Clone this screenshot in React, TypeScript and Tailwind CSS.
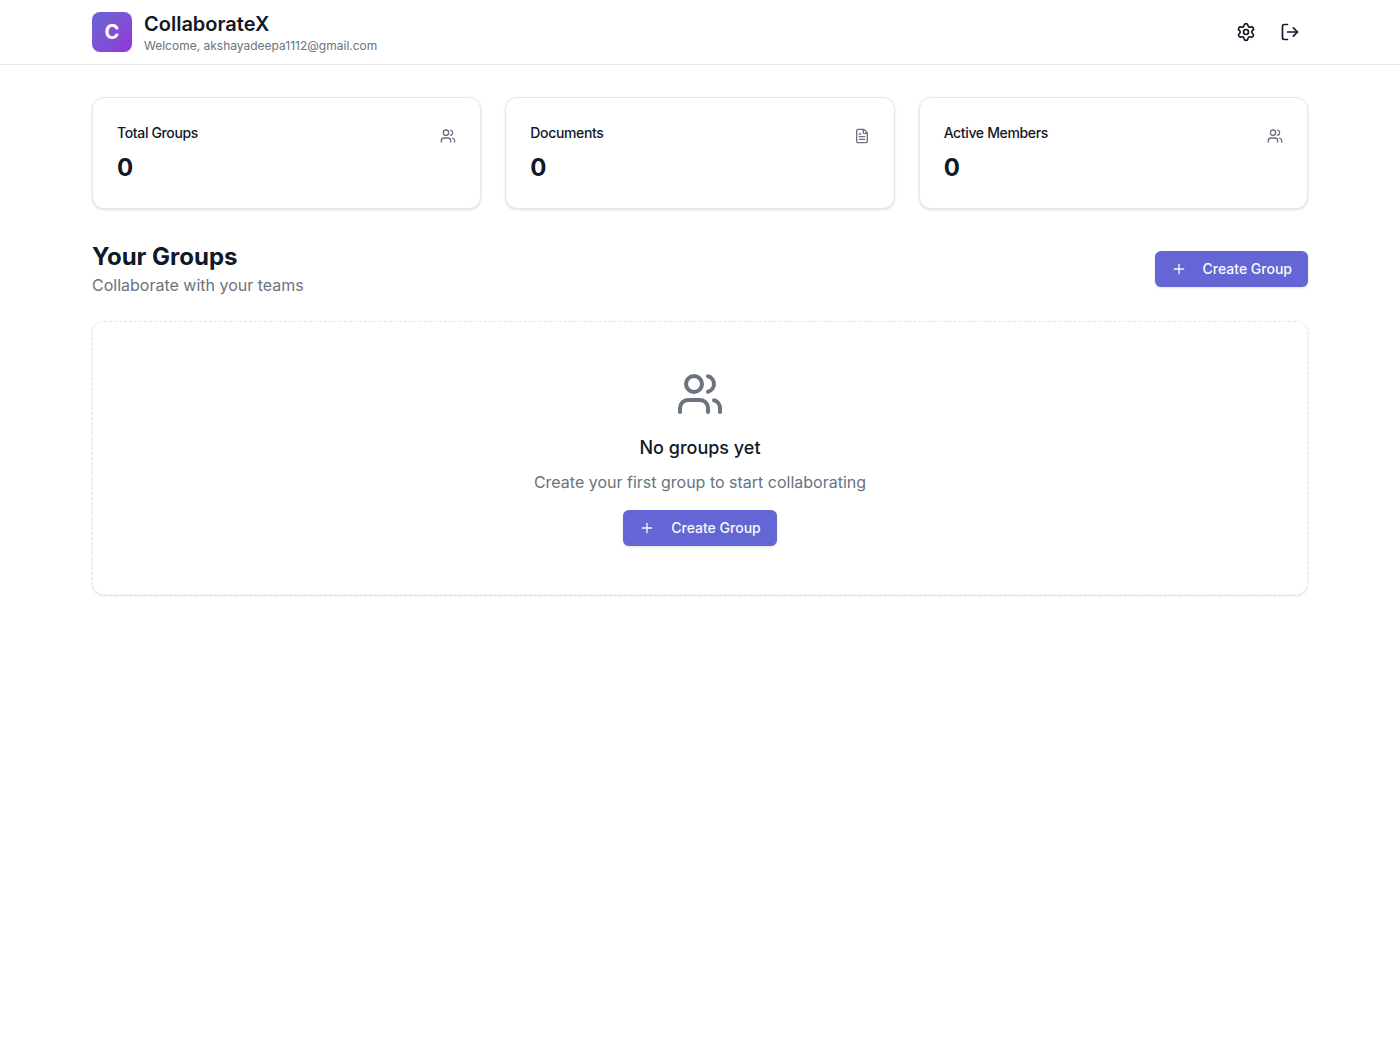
import { FileText, LogOut, Plus, Settings, Users } from "lucide-react";

function Stat({ label, icon }: { label: string; icon: "users" | "file" }) {
  const Icon = icon === "users" ? Users : FileText;
  return (
    <div className="rounded-xl border border-[#e5e7eb] bg-white px-6 pt-6 pb-6 shadow-sm">
      <div className="flex items-center justify-between pb-2">
        <span className="text-sm font-medium leading-5 tracking-tight text-[#111827]">{label}</span>
        <Icon className="mt-1.5 h-4 w-4 text-[#6b7280]" strokeWidth={2} />
      </div>
      <div className="text-2xl font-bold leading-8 text-[#111827]">0</div>
    </div>
  );
}

function CreateButton() {
  return (
    <button className="flex h-9 items-center rounded-md bg-[#6366d4] px-4 text-sm font-medium text-[#f8fafc] shadow-sm">
      <Plus className="mr-4 h-4 w-4" strokeWidth={2} />
      Create Group
    </button>
  );
}

export default function App() {
  return (
    <div className="min-h-[1050px] bg-white font-['Inter',sans-serif] text-[#111827]">
      <header className="h-[65px] border-b border-[#e5e7eb] bg-white">
        <div className="mx-auto flex h-16 max-w-7xl items-center justify-between px-8">
          <div className="flex items-center gap-3">
            <div className="flex h-10 w-10 items-center justify-center rounded-lg bg-gradient-to-br from-[#6366d4] to-[#9333d8] text-xl font-bold text-white">
              C
            </div>
            <div>
              <h1 className="text-xl font-semibold leading-7 text-[#111827]">CollaborateX</h1>
              <p className="text-xs leading-4 text-[#6b7280]">Welcome, akshayadeepa1112@gmail.com</p>
            </div>
          </div>
          <div className="flex items-center gap-2">
            <button className="flex h-9 w-9 items-center justify-center text-[#111827]">
              <Settings className="h-5 w-5" />
            </button>
            <button className="flex h-9 w-9 items-center justify-center text-[#111827]">
              <LogOut className="h-5 w-5" />
            </button>
          </div>
        </div>
      </header>
      <main className="mx-auto max-w-7xl px-8 py-8">
        <div className="grid grid-cols-3 gap-6">
          <Stat label="Total Groups" icon="users" />
          <Stat label="Documents" icon="file" />
          <Stat label="Active Members" icon="users" />
        </div>
        <div className="mt-8 flex items-center justify-between">
          <div>
            <h2 className="text-2xl font-bold leading-8 text-[#111827]">Your Groups</h2>
            <p className="text-base leading-6 text-[#6b7280]">Collaborate with your teams</p>
          </div>
          <CreateButton />
        </div>
        <div className="mt-6 flex flex-col items-center rounded-xl border border-dashed border-[#e5e7eb] bg-white py-12 shadow-sm">
          <Users className="h-12 w-12 text-[#6b7280]" strokeWidth={2} />
          <h3 className="mt-4 text-lg font-medium leading-7 text-[#111827]">No groups yet</h3>
          <p className="mt-2 text-base leading-6 text-[#6b7280]">Create your first group to start collaborating</p>
          <div className="mt-4">
            <CreateButton />
          </div>
        </div>
      </main>
    </div>
  );
}
